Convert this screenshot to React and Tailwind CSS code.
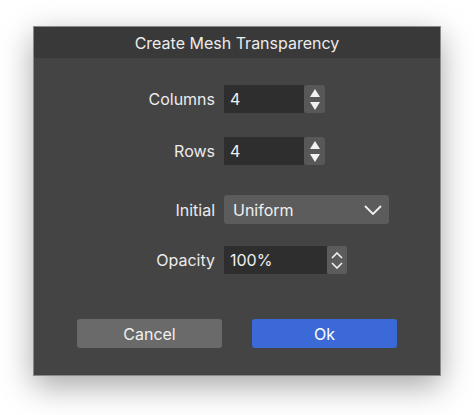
import React from 'react'

const font = { fontFamily: 'Inter, "Noto Sans", sans-serif' }

const Stepper = () => (
    <div className="w-[21px] h-[28px] bg-[#585858] rounded-[3px] flex flex-col items-center justify-center gap-[5px]">
        <svg width="10" height="8" viewBox="0 0 10 8"><polygon points="5,0 10,8 0,8" fill="#f2f2f2" /></svg>
        <svg width="10" height="8" viewBox="0 0 10 8"><polygon points="0,0 10,0 5,8" fill="#f2f2f2" /></svg>
    </div>
)

const ChevronStepper = () => (
    <div className="w-[20px] h-[28px] bg-[#5c5c5c] rounded-[2px] flex flex-col items-center justify-center gap-[3px]">
        <svg width="12" height="7" viewBox="0 0 12 7"><polyline points="1,6 6,1 11,6" fill="none" stroke="#f2f2f2" strokeWidth="1.6" /></svg>
        <svg width="12" height="7" viewBox="0 0 12 7"><polyline points="1,1 6,6 11,1" fill="none" stroke="#f2f2f2" strokeWidth="1.6" /></svg>
    </div>
)

const Label = ({children}) => (
    <div className="w-[190px] pr-[9px] text-right text-[16px] text-[#ececec]">{children}</div>
)

const App = () => {
    return (
        <div className="w-[474px] h-[415px] bg-white pt-[26px] pl-[33px]" style={font}>
            <div className="w-[408px] h-[350px] bg-[#444444] border border-[#8a8a8a] shadow-[0_10px_30px_rgba(0,0,0,0.35)] flex flex-col">
                <div className="h-[31px] bg-[#393939] flex items-center justify-center text-[16px] text-[#ececec]">
                    Create Mesh Transparency
                </div>
                <div className="flex items-center mt-[27px]">
                    <Label>Columns</Label>
                    <div className="w-[80px] h-[28px] bg-[#2e2e2e] pl-[6px] flex items-center text-[16px] text-[#f0f0f0]">4</div>
                    <Stepper />
                </div>
                <div className="flex items-center mt-[24px]">
                    <Label>Rows</Label>
                    <div className="w-[80px] h-[28px] bg-[#2e2e2e] pl-[6px] flex items-center text-[16px] text-[#f0f0f0]">4</div>
                    <Stepper />
                </div>
                <div className="flex items-center mt-[30px]">
                    <Label>Initial</Label>
                    <div className="w-[165px] h-[29px] bg-[#5c5c5c] rounded-[3px] pl-[9px] pr-[7px] flex items-center justify-between text-[16px] text-[#f0f0f0]">
                        <span>Uniform</span>
                        <svg width="18" height="10" viewBox="0 0 18 10"><polyline points="1,1 9,9 17,1" fill="none" stroke="#f2f2f2" strokeWidth="1.8" /></svg>
                    </div>
                </div>
                <div className="flex items-center mt-[22px]">
                    <Label>Opacity</Label>
                    <div className="w-[103px] h-[28px] bg-[#2e2e2e] pl-[6px] flex items-center text-[16px] text-[#f0f0f0]">100%</div>
                    <ChevronStepper />
                </div>
                <div className="flex gap-[30px] pl-[43px] mt-[45px]">
                    <button className="w-[145px] h-[29px] bg-[#6a6a6a] rounded-[3px] text-[16px] text-[#f0f0f0]">Cancel</button>
                    <button className="w-[145px] h-[29px] bg-[#3b6ad8] rounded-[3px] text-[16px] text-white">Ok</button>
                </div>
            </div>
        </div>
    )
}

export default App
